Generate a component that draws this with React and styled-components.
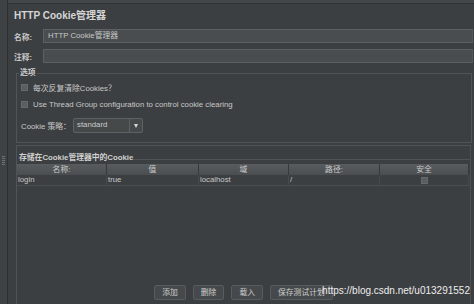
import React from "react";
import styled, { createGlobalStyle } from "styled-components";

const Global = createGlobalStyle`
  html, body { margin: 0; padding: 0; background: #3c3f41; }
  * { box-sizing: border-box; }
  body { font-family: "Liberation Sans", "Noto Sans CJK SC", sans-serif; }
`;

const Root = styled.div`
  position: relative;
  width: 474px;
  height: 304px;
  overflow: hidden;
  display: flex;
  background: #3c3f41;
  color: #bdbdbd;
  font-size: 7.8px;
`;

const LeftStrip = styled.div`
  width: 8px;
  flex: none;
  background: #3f4244;
  border-right: 1px solid #2d3032;
  display: flex;
  justify-content: center;
  padding-top: 156px;
`;

const Grip = styled.div`
  width: 3px;
  height: 10px;
  background: repeating-linear-gradient(#6e7274 0 1px, transparent 1px 2px);
`;

const Main = styled.div`
  flex: 1;
  display: flex;
  flex-direction: column;
  min-width: 0;
`;

const TopEdge = styled.div`
  height: 4px;
  flex: none;
  background: #44474a;
  border-bottom: 1px solid #303335;
`;

const Body = styled.div`
  flex: 1;
  display: flex;
  flex-direction: column;
  padding: 0 1px 0 6px;
`;

const Title = styled.div`
  height: 24px;
  line-height: 24px;
  font-size: 10px;
  font-weight: bold;
  color: #d6d6d6;
  white-space: nowrap;
`;

const FieldRow = styled.div`
  display: flex;
  align-items: center;
  height: 14px;
  margin-top: ${(p) => p.$mt || 0}px;
`;

const Label = styled.div`
  width: ${(p) => p.$w || 29}px;
  flex: none;
  white-space: nowrap;
  color: #c8c8c8;
  font-weight: ${(p) => (p.$bold ? "bold" : "normal")};
`;

const TextBox = styled.div`
  flex: 1;
  height: 14px;
  background: #494d4f;
  border: 1px solid #5c6062;
  border-right-color: #53575a;
  padding-left: 4px;
  line-height: 12px;
  color: #c8c8c8;
  white-space: nowrap;
`;

const Options = styled.fieldset`
  margin: 5px 1px 0 2px;
  padding: 0 0 9px 4px;
  border: 1px solid #505456;
  display: flex;
  flex-direction: column;
`;

const Legend = styled.legend`
  padding: 0 1px;
  margin-left: -2px;
  font-weight: bold;
  color: #cacaca;
  line-height: 10px;
`;

const CheckRow = styled.div`
  display: flex;
  align-items: center;
  gap: 5px;
  height: 10px;
  margin-top: ${(p) => p.$mt}px;
  white-space: nowrap;
  color: #c8c8c8;
`;

const Box = styled.span`
  width: 7px;
  height: 7px;
  flex: none;
  background: #5b5e60;
  border: 1px solid #676a6c;
`;

const SelectRow = styled.div`
  display: flex;
  align-items: center;
  height: 15px;
  margin-top: 9px;
`;

const Select = styled.div`
  width: 70px;
  height: 15px;
  display: flex;
  background: #45494a;
  border: 1px solid #5d6163;
  border-radius: 2px;
`;

const SelectValue = styled.div`
  flex: 1;
  padding-left: 3px;
  line-height: 11px;
  color: #cacaca;
`;

const Arrow = styled.div`
  width: 13px;
  border-left: 1px solid #5d6163;
  display: flex;
  align-items: center;
  justify-content: center;
  &::after {
    content: "";
    border-left: 2.5px solid transparent;
    border-right: 2.5px solid transparent;
    border-top: 4px solid #d8d8d8;
  }
`;

const CookieSection = styled.div`
  flex: 1;
  margin: 2px 2px 0 2px;
  border-top: 1px solid #505456;
  border-left: 1px solid #505456;
  border-right: 1px solid #4c5052;
  display: flex;
  flex-direction: column;
`;

const SectionHead = styled.div`
  display: flex;
  align-items: center;
  height: 18px;
  padding-left: 2px;
  padding-top: 3px;
`;

const SectionTitle = styled.span`
  font-weight: bold;
  color: #d0d0d0;
  white-space: nowrap;
`;

const Rule = styled.span`
  flex: 1;
  height: 1px;
  margin-top: 6px;
  background: #505456;
`;

const Grid = styled.div`
  display: grid;
  grid-template-columns: 90px 92px 90px 91px 89px;
`;

const HeadCell = styled.div`
  height: 11px;
  line-height: 11px;
  text-align: center;
  background: linear-gradient(#585c5e, #4a4e50);
  border-right: 1px solid #36393b;
  color: #cacaca;
`;

const Cell = styled.div`
  height: 11px;
  line-height: 10px;
  padding-left: 1px;
  border-right: 1px solid #464a4c;
  border-bottom: 1px solid #4a4e50;
  display: flex;
  align-items: center;
  justify-content: ${(p) => (p.$center ? "center" : "flex-start")};
  color: #c8c8c8;
`;

const Spacer = styled.div`
  flex: 1;
`;

const Buttons = styled.div`
  display: flex;
  justify-content: center;
  gap: 7px;
  padding-bottom: 4px;
`;

const Button = styled.div`
  height: 15px;
  line-height: 13px;
  padding: 0 7px;
  background: #46494b;
  border: 1px solid #585c5e;
  border-radius: 2px;
  color: #cecece;
  white-space: nowrap;
`;

const Watermark = styled.div`
  position: absolute;
  right: 4px;
  top: 285px;
  font-family: "Liberation Sans", Arial, sans-serif;
  font-size: 10px;
  color: #ededed;
  white-space: nowrap;
`;

const cols = ["名称:", "值", "域", "路径:", "安全"];

export default function App() {
  return (
    <>
      <Global />
      <Root>
        <LeftStrip>
          <Grip />
        </LeftStrip>
        <Main>
          <TopEdge />
          <Body>
            <Title>HTTP Cookie管理器</Title>
            <FieldRow $mt={1}>
              <Label $bold>名称:</Label>
              <TextBox>HTTP Cookie管理器</TextBox>
            </FieldRow>
            <FieldRow $mt={6}>
              <Label $bold>注释:</Label>
              <TextBox />
            </FieldRow>
            <Options>
              <Legend>选项</Legend>
              <CheckRow $mt={4}>
                <Box />
                <span>每次反复清除Cookies？</span>
              </CheckRow>
              <CheckRow $mt={7}>
                <Box />
                <span>Use Thread Group configuration to control cookie clearing</span>
              </CheckRow>
              <SelectRow>
                <Label $w={52}>Cookie 策略：</Label>
                <Select>
                  <SelectValue>standard</SelectValue>
                  <Arrow />
                </Select>
              </SelectRow>
            </Options>
            <CookieSection>
              <SectionHead>
                <SectionTitle>存储在Cookie管理器中的Cookie</SectionTitle>
                <Rule />
              </SectionHead>
              <Grid>
                {cols.map((c) => (
                  <HeadCell key={c}>{c}</HeadCell>
                ))}
                <Cell>login</Cell>
                <Cell>true</Cell>
                <Cell>localhost</Cell>
                <Cell>/</Cell>
                <Cell $center>
                  <Box />
                </Cell>
              </Grid>
              <Spacer />
              <Buttons>
                <Button>添加</Button>
                <Button>删除</Button>
                <Button>载入</Button>
                <Button>保存测试计划</Button>
              </Buttons>
            </CookieSection>
          </Body>
        </Main>
        <Watermark>https://blog.csdn.net/u013291552</Watermark>
      </Root>
    </>
  );
}
